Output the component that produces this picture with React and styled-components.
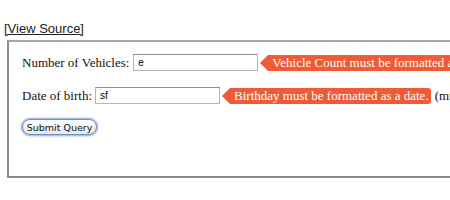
import React from 'react';
import styled, { createGlobalStyle } from 'styled-components';

const Global = createGlobalStyle`
  html, body { margin: 0; padding: 0; background: #fff; overflow: hidden; }
  body { font-family: "Liberation Serif", "Times New Roman", serif; font-size: 13px; color: #111; }
`;

const Page = styled.div`
  width: 450px;
  height: 200px;
  padding-top: 21px;
  box-sizing: border-box;
  overflow: hidden;
`;

const SourceLink = styled.a`
  display: block;
  margin-left: 4px;
  font-family: "Liberation Sans", Arial, sans-serif;
  font-size: 13px;
  line-height: 15px;
  color: #222;
  text-decoration: underline;
`;

const Box = styled.div`
  margin: 4px 0 0 7px;
  width: 470px;
  height: 138px;
  box-sizing: border-box;
  border: 2px solid #8c8c8c;
  border-top-color: #a6a6a6;
  padding: 12px 0 0 13px;
  display: flex;
  flex-direction: column;
  gap: 16px;
`;

const Row = styled.div`
  display: flex;
  align-items: center;
  height: 17px;
  white-space: nowrap;
`;

const Label = styled.label`
  font-size: 13px;
  margin-right: ${p => p.$gap || 4}px;
`;

const Input = styled.input`
  width: ${p => p.$w || 125}px;
  height: 17px;
  box-sizing: border-box;
  border: 1px solid #b5b5b5;
  border-top-color: #8e8e8e;
  padding: 0 4px;
  font-family: "Liberation Sans", Arial, sans-serif;
  font-size: 10px;
  color: #000;
  outline: none;
`;

const Tag = styled.span`
  position: relative;
  display: inline-flex;
  align-items: center;
  height: 16px;
  margin-left: 10px;
  padding: 0 2px 0 4px;
  background: #f05a35;
  color: #fff;
  font-size: 13px;
  border-radius: 0 3px 3px 0;
  &::before {
    content: '';
    position: absolute;
    left: -8px;
    top: 0;
    border-style: solid;
    border-width: 8px 8px 8px 0;
    border-color: transparent #f05a35 transparent transparent;
  }
`;

const Hint = styled.span`
  margin-left: 4px;
  font-size: 13px;
`;

const Submit = styled.button`
  align-self: flex-start;
  margin-top: -1px;
  width: 75px;
  height: 16px;
  padding: 0;
  border: 1px solid #6d8fc4;
  border-radius: 8px;
  background: linear-gradient(#ffffff, #e9e9e9);
  box-shadow: 0 0 0 1px #a9c3e8, 0 0 2px 1px #86a9dc;
  font-family: "DejaVu Sans", "Liberation Sans", sans-serif;
  font-size: 9.5px;
  color: #111;
`;

export default function App() {
  return (
    <Page>
      <Global />
      <SourceLink href="#">[View Source]</SourceLink>
      <Box>
        <Row>
          <Label>Number of Vehicles:</Label>
          <Input defaultValue="e" />
          <Tag>Vehicle Count must be formatted as a number.</Tag>
        </Row>
        <Row>
          <Label $gap={3}>Date of birth:</Label>
          <Input defaultValue="sf" />
          <Tag>Birthday must be formatted as a date.</Tag>
          <Hint>(mm/dd/yyyy)</Hint>
        </Row>
        <Submit>Submit Query</Submit>
      </Box>
    </Page>
  );
}
